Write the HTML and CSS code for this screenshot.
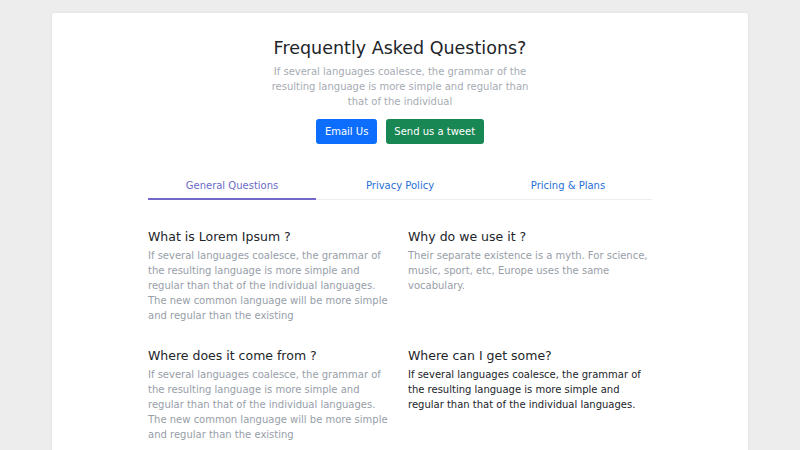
FILE: index.html
```html
<!DOCTYPE html>
<html lang="en">
<head>
<meta charset="utf-8">
<title>FAQ</title>
<link rel="stylesheet" href="styles.css">
</head>
<body>
<div class="card">
  <div class="intro">
    <h1 class="title">Frequently Asked Questions?</h1>
    <p class="subtitle">If several languages coalesce, the grammar of the resulting language is more simple and regular than that of the individual</p>
    <div class="actions">
      <a class="btn btn-blue" href="#">Email Us</a>
      <a class="btn btn-green" href="#">Send us a tweet</a>
    </div>
  </div>
  <div class="content">
    <nav class="tabs">
      <a class="tab active" href="#">General Questions</a>
      <a class="tab" href="#">Privacy Policy</a>
      <a class="tab" href="#">Pricing &amp; Plans</a>
    </nav>
    <div class="faq">
      <div class="item">
        <h2 class="q">What is Lorem Ipsum ?</h2>
        <p class="a">If several languages coalesce, the grammar of the resulting language is more simple and regular than that of the individual languages. The new common language will be more simple and regular than the existing</p>
      </div>
      <div class="item">
        <h2 class="q">Why do we use it ?</h2>
        <p class="a">Their separate existence is a myth. For science, music, sport, etc, Europe uses the same vocabulary.</p>
      </div>
      <div class="item">
        <h2 class="q">Where does it come from ?</h2>
        <p class="a">If several languages coalesce, the grammar of the resulting language is more simple and regular than that of the individual languages. The new common language will be more simple and regular than the existing</p>
      </div>
      <div class="item">
        <h2 class="q">Where can I get some?</h2>
        <p class="a dark">If several languages coalesce, the grammar of the resulting language is more simple and regular than that of the individual languages.</p>
      </div>
    </div>
  </div>
</div>
</body>
</html>
```
FILE: styles.css
```css
* { box-sizing: border-box; }
html, body { margin: 0; padding: 0; }
body {
  background: #ededed;
  font-family: "DejaVu Sans", sans-serif;
  color: #212529;
  font-size: 10px;
  line-height: 15px;
  height: 450px;
  overflow: hidden;
}
.card {
  width: 696px;
  margin: 13px auto 0;
  background: #fff;
  border-radius: 3px;
  box-shadow: 0 0 3px rgba(0,0,0,0.06);
  padding: 25px 96px 40px;
  min-height: 460px;
}
.intro { text-align: center; }
.title {
  margin: 0;
  font-size: 17.5px;
  line-height: 21px;
  font-weight: 400;
  color: #212529;
}
.subtitle {
  margin: 5px auto 0;
  width: 264px;
  color: #a6abb3;
}
.actions {
  margin-top: 10px;
  display: flex;
  justify-content: center;
  gap: 9px;
}
.btn {
  display: inline-block;
  padding: 3.75px 7.5px;
  border: 1px solid transparent;
  border-radius: 2.5px;
  color: #fff;
  text-decoration: none;
  font-size: 10px;
  line-height: 15px;
}
.btn-blue { background: #0d6efd; border-color: #0d6efd; }
.btn-green { background: #198754; border-color: #198754; }
.content { margin-top: 29px; }
.tabs {
  display: flex;
  border-bottom: 1px solid #eceef1;
}
.tab {
  flex: 1;
  text-align: center;
  padding: 5px 10px 5px;
  color: #1f6fd6;
  text-decoration: none;
  border-bottom: 2px solid transparent;
  margin-bottom: -1px;
}
.tab.active {
  color: #6b6bc8;
  border-bottom-color: #7367c8;
}
.faq {
  margin-top: 29px;
  display: grid;
  grid-template-columns: 244px 244px;
  column-gap: 16px;
  row-gap: 25px;
}
.q {
  margin: 0;
  font-size: 12.5px;
  line-height: 15px;
  font-weight: 400;
  color: #212529;
}
.a {
  margin: 4px 0 0;
  color: #979ea8;
}
.a.dark { color: #212529; }
```
